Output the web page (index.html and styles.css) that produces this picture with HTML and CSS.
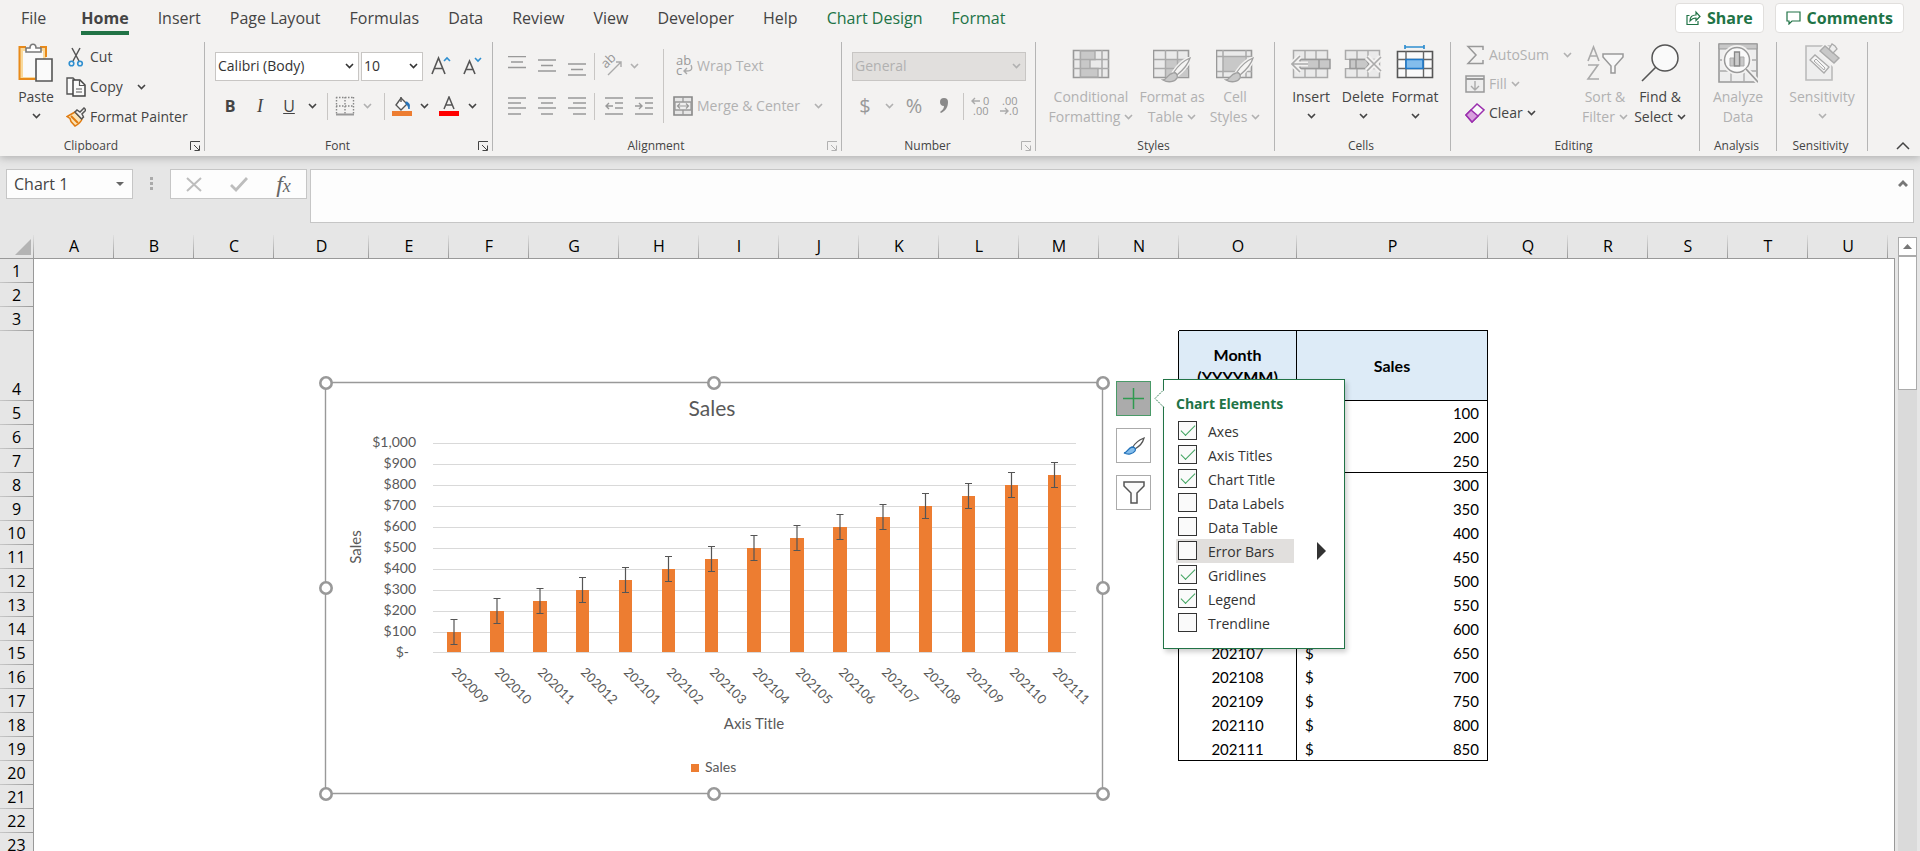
FILE: index.html
```html
<!DOCTYPE html>
<html lang="en">
<head>
<meta charset="utf-8">
<title>Sales workbook</title>
<link rel="stylesheet" href="styles.css">
</head>
<body>
<svg class="defs" aria-hidden="true">
  <defs>
    <symbol id="chev" viewBox="0 0 9 6"><path d="M1 1l3.500 3.500L8 1" fill="none" stroke="currentColor" stroke-width="1.600"/></symbol>
    <symbol id="launch" viewBox="0 0 11 11"><path d="M.5 9V.5H10M4 4l5 5M9.500 4.500v5h-5" fill="none" stroke="currentColor"/></symbol>
    <symbol id="brush" viewBox="0 0 30 26">
      <path d="M29 1c-7 3-12 8-16 14l3 3C22 13 27 8 29 1z" fill="#f5f4f3" stroke="#f3f2f1" stroke-width="4"/>
      <path d="M29 1c-7 3-12 8-16 14l3 3C22 13 27 8 29 1z" fill="#f5f4f3" stroke="#a0a0a0" stroke-width="1.300"/>
      <path d="M12 16c3-1 5 2 4 5-2 4-9 5-14 2 4 0 4-6 10-7z" fill="#c8c8c8" stroke="#a0a0a0" stroke-width="1.300"/>
    </symbol>
  </defs>
</svg>

<header class="ribbon">
  <nav class="tabs" aria-label="Ribbon tabs">
    <a class="tab" href="#file">File</a>
    <a class="tab current" href="#home">Home</a>
    <a class="tab" href="#insert">Insert</a>
    <a class="tab" href="#layout">Page Layout</a>
    <a class="tab" href="#formulas">Formulas</a>
    <a class="tab" href="#data">Data</a>
    <a class="tab" href="#review">Review</a>
    <a class="tab" href="#view">View</a>
    <a class="tab" href="#developer">Developer</a>
    <a class="tab" href="#help">Help</a>
    <a class="tab context" href="#chart-design">Chart Design</a>
    <a class="tab context" href="#format">Format</a>
    <div class="tab-actions">
      <button class="pill"><svg width="15" height="16" viewBox="0 0 15 16"><path d="M3.500 5.500H1v9h11V11M4 11c0-4 2-6 6-6V2l4 4.500-4 4V8c-3 0-4 .5-6 3z" fill="none" stroke="#217346" stroke-width="1.200"/></svg>Share</button>
      <button class="pill"><svg width="15" height="14" viewBox="0 0 15 14"><path d="M1 1h13v9H6l-3 3v-3H1z" fill="none" stroke="#217346" stroke-width="1.200"/></svg>Comments</button>
    </div>
  </nav>

  <div class="groups">
    <section class="group g-clipboard">
      <div class="group-body">
        <button class="big w48">
          <span class="icon"><svg width="36" height="40" viewBox="0 0 36 40"><path d="M2 5h26v32H2z" fill="#f9d99b"/><path d="M5 8h20v26H5z" fill="#fafafa"/><path d="M8 4H1.500v32H17M22 4h6v10" fill="none" stroke="#e88a1a" stroke-width="2"/><path d="M8 9V5h4c0-5 6-5 6 0h5v4z" fill="#fff" stroke="#7a7a7a" stroke-width="1.600"/><path d="M18 16h16v22H18z" fill="#fafafa" stroke="#555" stroke-width="1.600"/></svg></span>
          <span>Paste</span><svg class="chev"><use href="#chev"/></svg>
        </button>
        <div class="stack">
          <button class="small"><svg width="20" height="20" viewBox="0 0 20 20"><path d="M6 1l7 13M14 1L7 14" fill="none" stroke="#555" stroke-width="1.500"/><circle cx="5.500" cy="16.500" r="2.300" fill="none" stroke="#2f8fd0" stroke-width="1.600"/><circle cx="14" cy="16.500" r="2.300" fill="none" stroke="#2f8fd0" stroke-width="1.600"/></svg>Cut</button>
          <button class="small"><svg width="20" height="20" viewBox="0 0 20 20"><path d="M7 17H1V1h6l2 2" fill="#fafafa" stroke="#555" stroke-width="1.400"/><path d="M7 3h7l5 5v11H7z" fill="#fafafa" stroke="#444" stroke-width="1.500"/><path d="M13.500 3v5.500H19M10 12h6M10 15h6" fill="none" stroke="#555" stroke-width="1.200"/></svg>Copy<svg class="chev gap-left"><use href="#chev"/></svg></button>
          <button class="small"><svg width="20" height="20" viewBox="0 0 20 20"><path d="M9 5L1 9.500l3 2 1 3 4 4.500c3-1.500 6-4 7-7z" fill="#fbe3b5" stroke="#e07b10" stroke-width="1.500"/><path d="M5 9l7 7" stroke="#e07b10" stroke-width="2"/><path d="M9 5l2-2 3 2 4-4 2 2-4 4 1.500 3-2 2z" fill="#f3f2f1" stroke="#555" stroke-width="1.500"/></svg>Format Painter</button>
        </div>
      </div>
      <div class="group-label"><span>Clipboard</span><svg class="launch"><use href="#launch"/></svg></div>
    </section>

    <section class="group g-font">
      <div class="group-body">
        <div class="rows">
          <div class="row">
            <label class="combo w144"><select aria-label="Font"><option>Calibri (Body)</option></select><svg class="chev"><use href="#chev"/></svg></label>
            <label class="combo w62"><select aria-label="Font size"><option>10</option></select><svg class="chev"><use href="#chev"/></svg></label>
            <button class="tool w32" aria-label="Increase font size"><svg width="20" height="20" viewBox="0 0 20 20"><path d="M1 18L7.500 2 14 18M3.500 12.500h8" fill="none" stroke="#555" stroke-width="1.600"/><path d="M13 5l3-3 3 3" fill="none" stroke="#2f8fd0" stroke-width="1.600"/></svg></button>
            <button class="tool w32" aria-label="Decrease font size"><svg width="20" height="20" viewBox="0 0 20 20"><path d="M1 18L6.500 5 12 18M3 13.500h7" fill="none" stroke="#555" stroke-width="1.600"/><path d="M12 2l3 3 3-3" fill="none" stroke="#2f8fd0" stroke-width="1.600"/></svg></button>
          </div>
          <div class="row">
            <button class="tool w30 glyph"><b>B</b></button>
            <button class="tool w30 glyph"><i>I</i></button>
            <button class="tool w28 glyph"><u>U</u></button>
            <button class="tool w18" aria-label="Underline options"><svg class="chev"><use href="#chev"/></svg></button>
            <span class="vline"></span>
            <button class="tool w22" aria-label="Borders"><svg width="20" height="20" viewBox="0 0 20 20"><path d="M1 1.500h18M1 10h18M1.500 1v18M10 1v18M18.500 1v18" fill="none" stroke="#888" stroke-width="1.400" stroke-dasharray="1.500 1.500"/><path d="M1 18.500h18" stroke="#999" stroke-width="2"/></svg></button>
            <button class="tool w22 off" aria-label="Border options"><svg class="chev"><use href="#chev"/></svg></button>
            <span class="vline"></span>
            <button class="tool w22" aria-label="Fill color"><svg width="20" height="20" viewBox="0 0 20 20"><path d="M9 2l6 6-6 6-5-5z" fill="#fafafa" stroke="#555" stroke-width="1.400"/><path d="M9 1v5" stroke="#555" stroke-width="1.400"/><path d="M14 6c3 0 4 3 3 7-1-3-1-4-3-5z" fill="#2372b9" stroke="#2372b9"/><path d="M0 15h20v5H0z" fill="#ed7d31"/></svg></button>
            <button class="tool w22" aria-label="Fill color options"><svg class="chev"><use href="#chev"/></svg></button>
            <button class="tool w28" aria-label="Font color"><svg width="20" height="20" viewBox="0 0 20 20"><path d="M5 13L10 1l5 12M7 9h6" fill="none" stroke="#555" stroke-width="1.500"/><path d="M0 15h20v5H0z" fill="#f00"/></svg></button>
            <button class="tool w18" aria-label="Font color options"><svg class="chev"><use href="#chev"/></svg></button>
          </div>
        </div>
      </div>
      <div class="group-label"><span>Font</span><svg class="launch"><use href="#launch"/></svg></div>
    </section>

    <section class="group g-align off">
      <div class="group-body">
        <div class="rows">
          <div class="row">
            <button class="tool w30" aria-label="Top align"><svg width="18" height="20"><path d="M0 .5h18M3 6h12M0 11.500h18" stroke="#999" stroke-width="1.500"/></svg></button>
            <button class="tool w30" aria-label="Middle align"><svg width="18" height="20"><path d="M0 4h18M3 9.500h12M0 15h18" stroke="#999" stroke-width="1.500"/></svg></button>
            <button class="tool w30" aria-label="Bottom align"><svg width="18" height="20"><path d="M0 8h18M3 13.500h12M0 19h18" stroke="#999" stroke-width="1.500"/></svg></button>
            <span class="vline"></span>
            <button class="tool w26" aria-label="Orientation"><svg width="22" height="24" viewBox="0 0 22 24"><text x="5" y="15" transform="rotate(-45 5 15)" class="ico-text">ab</text><path d="M7 21L20 8M15 8h5v5" fill="none" stroke="#aaa" stroke-width="1.400"/></svg></button>
            <button class="tool w18" aria-label="Orientation options"><svg class="chev"><use href="#chev"/></svg></button>
          </div>
          <div class="row">
            <button class="tool w30" aria-label="Align left"><svg width="18" height="20"><path d="M0 2h18M0 7h13M0 12h18M0 18h13" stroke="#999" stroke-width="1.500"/></svg></button>
            <button class="tool w30" aria-label="Center"><svg width="18" height="20"><path d="M0 2h18M3 7h12M0 12h18M3 18h12" stroke="#999" stroke-width="1.500"/></svg></button>
            <button class="tool w30" aria-label="Align right"><svg width="18" height="20"><path d="M0 2h18M5 7h13M0 12h18M5 18h13" stroke="#999" stroke-width="1.500"/></svg></button>
            <span class="vline"></span>
            <button class="tool w30" aria-label="Decrease indent"><svg width="18" height="20"><path d="M0 2h18M10 7h8M10 12h8M0 18h18M8 10H1M4 7l-3 3 3 3" fill="none" stroke="#999" stroke-width="1.400"/></svg></button>
            <button class="tool w30" aria-label="Increase indent"><svg width="18" height="20"><path d="M0 2h18M10 7h8M10 12h8M0 18h18M0 10h7M4 7l3 3-3 3" fill="none" stroke="#999" stroke-width="1.400"/></svg></button>
          </div>
        </div>
        <span class="vline tall"></span>
        <div class="rows">
          <div class="row"><button class="small"><svg width="20" height="24" viewBox="0 0 20 24"><text x="3" y="11" class="ico-text">ab</text><text x="3" y="21" class="ico-text">c</text><path d="M18 11c3 7-4 6-7 6M14 14l-3 3 3 3" fill="none" stroke="#aaa" stroke-width="1.400"/></svg>Wrap Text</button></div>
          <div class="row"><button class="small"><svg width="20" height="20" viewBox="0 0 20 20"><path d="M1 1h18v18H1z" fill="#e6e6e6" stroke="#888" stroke-width="1.600"/><path d="M2 6h16v8H2zM10 1v5M10 14v5" fill="#eee" stroke="#999" stroke-width="1.300"/><path d="M4 10h12M7 7.500L4.500 10 7 12.500M13 7.500l2.500 2.500-2.500 2.500" fill="none" stroke="#999" stroke-width="1.200"/></svg>Merge &amp; Center<svg class="chev gap-left"><use href="#chev"/></svg></button></div>
        </div>
      </div>
      <div class="group-label"><span>Alignment</span><svg class="launch"><use href="#launch"/></svg></div>
    </section>

    <section class="group g-number off">
      <div class="group-body">
        <div class="rows">
          <div class="row"><label class="combo combo-off w174"><select aria-label="Number format" disabled><option>General</option></select><svg class="chev"><use href="#chev"/></svg></label></div>
          <div class="row">
            <button class="tool w28 sign">$</button>
            <button class="tool w20" aria-label="Currency options"><svg class="chev"><use href="#chev"/></svg></button>
            <button class="tool w30 sign" aria-label="Percent">%</button>
            <button class="tool w30" aria-label="Comma style"><svg width="10" height="18" viewBox="0 0 10 18"><path d="M1 5a4 4 0 0 1 8 0c0 6-3 9-7 11l-1-1c2-2 4-3 4-6C2 9 1 7 1 5z" fill="#8a8a8a"/></svg></button>
            <span class="vline"></span>
            <button class="tool w26" aria-label="Increase decimal"><svg width="22" height="24" viewBox="0 0 22 24"><path d="M10 7H2M5 4L2 7l3 3" fill="none" stroke="#aaa" stroke-width="1.400"/><text x="13" y="11" class="ico-text tiny">0</text><text x="3" y="21" class="ico-text tiny">.00</text></svg></button>
            <button class="tool w32" aria-label="Decrease decimal"><svg width="22" height="24" viewBox="0 0 22 24"><path d="M1 17h8M6 14l3 3-3 3" fill="none" stroke="#aaa" stroke-width="1.400"/><text x="3" y="11" class="ico-text tiny">.00</text><text x="10" y="21" class="ico-text tiny">.0</text></svg></button>
          </div>
        </div>
      </div>
      <div class="group-label"><span>Number</span><svg class="launch"><use href="#launch"/></svg></div>
    </section>

    <section class="group g-styles off">
      <div class="group-body">
        <button class="big w92"><span class="icon"><svg width="38" height="36" viewBox="0 0 38 36"><path d="M1.500 5.500h35v27h-35z" fill="#eaeaea" stroke="#999" stroke-width="1.600"/><path d="M1 14.500h36M1 23.500h36M8.500 5v27M30 5v27" stroke="#aaa" stroke-width="1.500"/><path d="M8.500 6H23v8.500H8.500zM8.500 14.500H18v9H8.500zM8.500 23.500H26V32H8.500z" fill="#c8c8c8" stroke="#aaa" stroke-width="1.400"/></svg></span><span>Conditional</span><span class="with-chev">Formatting<svg class="chev"><use href="#chev"/></svg></span></button>
        <button class="big w70"><span class="icon"><svg width="38" height="40" viewBox="0 0 38 40"><path d="M.5 7.500h35v27H.5z" fill="#eaeaea" stroke="#999" stroke-width="1.600"/><path d="M13 17h22v17H13z" fill="#c8c8c8"/><path d="M1 16.500h35M1 25.500h35M12.500 7v27M24.500 7v27" stroke="#aaa" stroke-width="1.500"/><use href="#brush" x="8" y="14" width="30" height="26"/></svg></span><span>Format as</span><span class="with-chev">Table<svg class="chev"><use href="#chev"/></svg></span></button>
        <button class="big w56"><span class="icon"><svg width="38" height="40" viewBox="0 0 38 40"><path d="M.5 7.500h35v27H.5z" fill="#eaeaea" stroke="#999" stroke-width="1.600"/><path d="M7 14h22v14H7z" fill="#c8c8c8"/><path d="M1 13.500h35M1 28.500h35M7 7v27M30 7v27" stroke="#aaa" stroke-width="1.500"/><use href="#brush" x="8" y="14" width="30" height="26"/></svg></span><span>Cell</span><span class="with-chev">Styles<svg class="chev"><use href="#chev"/></svg></span></button>
      </div>
      <div class="group-label"><span>Styles</span></div>
    </section>

    <section class="group g-cells">
      <div class="group-body">
        <button class="big w52"><span class="icon"><svg width="40" height="36" viewBox="0 0 40 36"><path d="M2.500 5.500h34v27h-34z" fill="#eaeaea" stroke="#aaa" stroke-width="1.500"/><path d="M2 14.500h34M2 23.500h34M14 5v27M25 5v27" stroke="#aaa" stroke-width="1.400"/><path d="M9 14.500h30v9H9zM28 14.500v9" fill="#c8c8c8" stroke="#999" stroke-width="1.500"/><path d="M17 19H2M9 11L1 19l8 8" fill="none" stroke="#f3f2f1" stroke-width="5"/><path d="M17 19H2M9 11L1 19l8 8" fill="none" stroke="#aaa" stroke-width="1.600"/></svg></span><span>Insert</span><svg class="chev"><use href="#chev"/></svg></button>
        <button class="big w52"><span class="icon"><svg width="40" height="36" viewBox="0 0 40 36"><path d="M2.500 5.500h34v27h-34z" fill="#eaeaea" stroke="#aaa" stroke-width="1.500"/><path d="M2 14.500h34M2 23.500h34M14 5v27M25 5v27" stroke="#aaa" stroke-width="1.400"/><path d="M0 15h6v8H0z" fill="#f3f2f1"/><path d="M7 14.500h16l3 4.500-3 4.500H7zM13 14.500v9" fill="#c8c8c8" stroke="#999" stroke-width="1.500"/><path d="M24 12l14 14M38 12L24 26" stroke="#f3f2f1" stroke-width="6"/><path d="M24 12l14 14M38 12L24 26" stroke="#aaa" stroke-width="1.600"/></svg></span><span>Delete</span><svg class="chev"><use href="#chev"/></svg></button>
        <button class="big w52"><span class="icon"><svg width="38" height="36" viewBox="0 0 38 36"><path d="M1.500 6.500h35v26h-35z" fill="#fafafa" stroke="#555" stroke-width="1.600"/><path d="M1 14.500h36M1 23.500h36M10 6v26M27.500 6v26" stroke="#666" stroke-width="1.400"/><path d="M10 14.500h17v9H10z" fill="#83bdec" stroke="#1e78c8" stroke-width="1.600"/><path d="M9 2h19M9 0v4M28 0v4" stroke="#2f8fd0" stroke-width="1.700"/></svg></span><span>Format</span><svg class="chev"><use href="#chev"/></svg></button>
      </div>
      <div class="group-label"><span>Cells</span></div>
    </section>

    <section class="group g-edit">
      <div class="group-body">
        <div class="stack tight">
          <button class="small off"><svg width="20" height="20" viewBox="0 0 20 20"><path d="M18 5V1.500H3L11 10l-8 8.500h15V15" fill="none" stroke="#999" stroke-width="1.500"/></svg>AutoSum<svg class="chev push"><use href="#chev"/></svg></button>
          <button class="small off"><svg width="20" height="20" viewBox="0 0 20 20"><path d="M1 2h18v16H1z" fill="#eee" stroke="#999" stroke-width="1.500"/><path d="M1 5h18" stroke="#999" stroke-width="2"/><path d="M10 7v9M6 12l4 4 4-4" fill="none" stroke="#aaa" stroke-width="1.400"/></svg>Fill<svg class="chev"><use href="#chev"/></svg></button>
          <button class="small"><svg width="20" height="20" viewBox="0 0 20 20"><path d="M1 12L12 1l7 6L7 19z" fill="#fafafa" stroke="#9b2fae" stroke-width="1.500"/><path d="M1 12l5-5 7 6-6 6z" fill="#d7a0dd" stroke="#9b2fae" stroke-width="1.500"/></svg>Clear<svg class="chev"><use href="#chev"/></svg></button>
        </div>
        <button class="big w52 off"><span class="icon"><svg width="38" height="38" viewBox="0 0 38 38"><path d="M2 17L7.500 3 13 17M4 12h7M2 21h10L2 35h11" fill="none" stroke="#aaa" stroke-width="1.600"/><path d="M17 10h20v3l-8 9v7h-4v-7l-8-9z" fill="#f8f8f8" stroke="#999" stroke-width="1.500"/></svg></span><span>Sort &amp;</span><span class="with-chev">Filter<svg class="chev"><use href="#chev"/></svg></span></button>
        <button class="big w58"><span class="icon"><svg width="38" height="38" viewBox="0 0 38 38"><circle cx="24" cy="14" r="13" fill="#fafafa" stroke="#555" stroke-width="1.500"/><path d="M15 23L1 37" stroke="#555" stroke-width="1.600"/></svg></span><span>Find &amp;</span><span class="with-chev">Select<svg class="chev"><use href="#chev"/></svg></span></button>
      </div>
      <div class="group-label"><span>Editing</span></div>
    </section>

    <section class="group g-analysis off">
      <div class="group-body">
        <button class="big w58"><span class="icon"><svg width="40" height="40" viewBox="0 0 40 40"><path d="M1 1h38v38H1z" fill="#eee" stroke="#999" stroke-width="1.600"/><path d="M1 1h38v5H1z" fill="#c8c8c8" stroke="#999"/><path d="M1 17h38M1 28h38M13 28v11M26 28v11M13 6v10M29 6v10" stroke="#aaa" stroke-width="1.300"/><circle cx="19" cy="17" r="15" fill="#f3f2f1"/><circle cx="19" cy="17" r="12.500" fill="#fafafa" stroke="#999" stroke-width="1.500"/><path d="M28 26l12 13" stroke="#f3f2f1" stroke-width="5"/><path d="M28 26l12 13" stroke="#999" stroke-width="1.800"/><path d="M12 15h4v8h-4zM22 14h4v9h-4z" fill="#c8c8c8" stroke="#aaa"/><path d="M16.500 9h5v14h-5z" fill="#ccc" stroke="#888" stroke-width="1.300"/></svg></span><span>Analyze</span><span>Data</span></button>
      </div>
      <div class="group-label"><span>Analysis</span></div>
    </section>

    <section class="group g-sens off">
      <div class="group-body">
        <button class="big w74"><span class="icon"><svg width="38" height="40" viewBox="0 0 38 40"><path d="M3 3h26v34H3z" fill="#eee" stroke="#bbb" stroke-width="1.600"/><path d="M7 17l5-5 14 12-5 6z" fill="#f5f5f5" stroke="#aaa" stroke-width="1.300"/><path d="M11 18l2-2 9 9-1 2z" fill="none" stroke="#aaa"/><path d="M17 8l5-5 5 4 4-5 5 4-5 5 4 4-5 6z" fill="#c8c8c8" stroke="#f3f2f1" stroke-width="4"/><path d="M17 8l5-5 14 12-5 5z" fill="#c8c8c8" stroke="#aaa" stroke-width="1.400"/><path d="M26 6l3-5 3 2 2 3-4 4z" fill="#eee" stroke="#aaa" stroke-width="1.300"/></svg></span><span>Sensitivity</span><svg class="chev"><use href="#chev"/></svg></button>
      </div>
      <div class="group-label"><span>Sensitivity</span></div>
    </section>
    <button class="collapse" aria-label="Collapse ribbon"><svg width="14" height="9" viewBox="0 0 14 9"><path d="M1 8l6-6 6 6" fill="none" stroke="#444" stroke-width="1.500"/></svg></button>
  </div>
</header>

<div class="formula-bar">
  <label class="name-box"><input aria-label="Name box" value="Chart 1"><svg width="8" height="5"><path d="M0 0h8L4 4z" fill="#666"/></svg></label>
  <span class="dots"><i></i><i></i><i></i></span>
  <div class="fx-box">
    <button aria-label="Cancel"><svg width="16" height="15" viewBox="0 0 16 15"><path d="M1 1l14 13M15 1L1 14" stroke="#bdbdbd" stroke-width="2"/></svg></button>
    <button aria-label="Enter"><svg width="18" height="15" viewBox="0 0 18 15"><path d="M1 8l5 5L17 1" fill="none" stroke="#bdbdbd" stroke-width="2.800"/></svg></button>
    <button class="fx" aria-label="Insert function">f<small>x</small></button>
  </div>
  <label class="formula"><textarea aria-label="Formula"></textarea><svg width="10" height="7" viewBox="0 0 10 7"><path d="M0 5l5-5 5 5-2 2-3-3-3 3z" fill="#777"/></svg></label>
</div>

<main class="workbook">
  <div class="sheet">
    <table class="grid">
      <colgroup><col class="c-head"><col span="3" class="c80"><col class="c95"><col span="2" class="c80"><col class="c90"><col span="7" class="c80"><col class="c118"><col class="c191"><col span="5" class="c80"><col></colgroup>
      <thead><tr><th class="corner"><svg width="16" height="16"><path d="M16 0v16H0z" fill="#b4b4b4"/></svg></th><th>A</th><th>B</th><th>C</th><th>D</th><th>E</th><th>F</th><th>G</th><th>H</th><th>I</th><th>J</th><th>K</th><th>L</th><th>M</th><th>N</th><th>O</th><th>P</th><th>Q</th><th>R</th><th>S</th><th>T</th><th>U</th><th class="tail"></th></tr></thead>
      <tbody>
        <tr><th>1</th><td colspan="14"></td><td></td><td></td><td colspan="6"></td></tr>
        <tr><th>2</th><td colspan="14"></td><td></td><td></td><td colspan="6"></td></tr>
        <tr class="rule"><th>3</th><td colspan="14"></td><td class="o"></td><td class="p"></td><td colspan="6"></td></tr>
        <tr class="title rule data"><th>4</th><td colspan="14"></td><td class="o">Month<br>(YYYYMM)</td><td class="p">Sales</td><td colspan="6"></td></tr>
        <tr class="data"><th>5</th><td colspan="14"></td><td class="o">202009</td><td class="p"><span>$</span>100</td><td colspan="6"></td></tr>
        <tr class="data"><th>6</th><td colspan="14"></td><td class="o">202010</td><td class="p"><span>$</span>200</td><td colspan="6"></td></tr>
        <tr class="data rule"><th>7</th><td colspan="14"></td><td class="o">202011</td><td class="p"><span>$</span>250</td><td colspan="6"></td></tr>
        <tr class="data"><th>8</th><td colspan="14"></td><td class="o">202012</td><td class="p"><span>$</span>300</td><td colspan="6"></td></tr>
        <tr class="data"><th>9</th><td colspan="14"></td><td class="o">202101</td><td class="p"><span>$</span>350</td><td colspan="6"></td></tr>
        <tr class="data"><th>10</th><td colspan="14"></td><td class="o">202102</td><td class="p"><span>$</span>400</td><td colspan="6"></td></tr>
        <tr class="data"><th>11</th><td colspan="14"></td><td class="o">202103</td><td class="p"><span>$</span>450</td><td colspan="6"></td></tr>
        <tr class="data"><th>12</th><td colspan="14"></td><td class="o">202104</td><td class="p"><span>$</span>500</td><td colspan="6"></td></tr>
        <tr class="data"><th>13</th><td colspan="14"></td><td class="o">202105</td><td class="p"><span>$</span>550</td><td colspan="6"></td></tr>
        <tr class="data"><th>14</th><td colspan="14"></td><td class="o">202106</td><td class="p"><span>$</span>600</td><td colspan="6"></td></tr>
        <tr class="data"><th>15</th><td colspan="14"></td><td class="o">202107</td><td class="p"><span>$</span>650</td><td colspan="6"></td></tr>
        <tr class="data"><th>16</th><td colspan="14"></td><td class="o">202108</td><td class="p"><span>$</span>700</td><td colspan="6"></td></tr>
        <tr class="data"><th>17</th><td colspan="14"></td><td class="o">202109</td><td class="p"><span>$</span>750</td><td colspan="6"></td></tr>
        <tr class="data"><th>18</th><td colspan="14"></td><td class="o">202110</td><td class="p"><span>$</span>800</td><td colspan="6"></td></tr>
        <tr class="data rule"><th>19</th><td colspan="14"></td><td class="o">202111</td><td class="p"><span>$</span>850</td><td colspan="6"></td></tr>
        <tr><th>20</th><td colspan="14"></td><td></td><td></td><td colspan="6"></td></tr>
        <tr><th>21</th><td colspan="14"></td><td></td><td></td><td colspan="6"></td></tr>
        <tr><th>22</th><td colspan="14"></td><td></td><td></td><td colspan="6"></td></tr>
        <tr><th>23</th><td colspan="14"></td><td></td><td></td><td colspan="6"></td></tr>
      </tbody>
    </table>

    <svg class="chart" width="793" height="427" viewBox="318 375 793 427" role="img" aria-label="Sales chart">
      <defs><path id="err" d="M0-12.500V12.500M-3.500-12.500h7M-3.500 12.500h7" fill="none" stroke="#555" stroke-width="1.200"/></defs>
      <path d="M325.500 382.500h777v411h-777z" fill="#fff" stroke="#999" stroke-width="1.400"/>
      <path d="M433 443.500h643M433 464.500h643M433 485.500h643M433 506.500h643M433 527.500h643M433 548.500h643M433 569.500h643M433 590.500h643M433 611.500h643M433 632.500h643M433 652.500h643" stroke="#d9d9d9"/>
      <g fill="#ed7d31">
        <path d="M447 632h14v20h-14zM490 611h14v41h-14zM533 601h14v51h-14zM576 590h13v62h-13zM619 580h13v72h-13zM662 569h13v83h-13zM705 559h13v93h-13zM747 548h14v104h-14zM790 538h14v114h-14zM833 527h14v125h-14zM876 517h14v135h-14zM919 506h13v146h-13zM962 496h13v156h-13zM1005 485h13v167h-13zM1048 475h13v177h-13z"/>
        <path d="M691 764h8v8h-8z"/>
      </g>
      <use href="#err" x="454" y="632"/><use href="#err" x="497" y="611"/><use href="#err" x="540" y="601"/><use href="#err" x="582.500" y="590"/><use href="#err" x="625.500" y="580"/><use href="#err" x="668.500" y="569"/><use href="#err" x="711.500" y="559"/><use href="#err" x="754" y="548"/><use href="#err" x="797" y="538"/><use href="#err" x="840" y="527"/><use href="#err" x="883" y="517"/><use href="#err" x="925.500" y="506"/><use href="#err" x="968.500" y="496"/><use href="#err" x="1011.500" y="485"/><use href="#err" x="1054.500" y="475"/>
      <g class="axis" text-anchor="end">
        <text x="416" y="447">$1,000</text><text x="416" y="468">$900</text><text x="416" y="489">$800</text><text x="416" y="510">$700</text><text x="416" y="531">$600</text><text x="416" y="552">$500</text><text x="416" y="573">$400</text><text x="416" y="594">$300</text><text x="416" y="615">$200</text><text x="416" y="636">$100</text><text x="409" y="657">$-</text>
      </g>
      <g class="axis-x">
        <text transform="translate(451 673) rotate(45)">202009</text><text transform="translate(494 673) rotate(45)">202010</text><text transform="translate(537 673) rotate(45)">202011</text><text transform="translate(580 673) rotate(45)">202012</text><text transform="translate(623 673) rotate(45)">202101</text><text transform="translate(666 673) rotate(45)">202102</text><text transform="translate(709 673) rotate(45)">202103</text><text transform="translate(752 673) rotate(45)">202104</text><text transform="translate(795 673) rotate(45)">202105</text><text transform="translate(838 673) rotate(45)">202106</text><text transform="translate(881 673) rotate(45)">202107</text><text transform="translate(923 673) rotate(45)">202108</text><text transform="translate(966 673) rotate(45)">202109</text><text transform="translate(1009 673) rotate(45)">202110</text><text transform="translate(1052 673) rotate(45)">202111</text>
      </g>
      <text class="axis" x="705" y="772">Sales</text>
      <text class="chart-title" x="712" y="416" text-anchor="middle">Sales</text>
      <text class="axis-title" x="754" y="729" text-anchor="middle">Axis Title</text>
      <text class="axis-title" transform="translate(361 547) rotate(-90)" text-anchor="middle">Sales</text>
      <g fill="#fff" stroke="#999" stroke-width="2.600">
        <circle cx="326" cy="383" r="5.700"/><circle cx="714" cy="383" r="5.700"/><circle cx="1103" cy="383" r="5.700"/><circle cx="326" cy="588" r="5.700"/><circle cx="1103" cy="588" r="5.700"/><circle cx="326" cy="794" r="5.700"/><circle cx="714" cy="794" r="5.700"/><circle cx="1103" cy="794" r="5.700"/>
      </g>
    </svg>

    <div class="chart-tools">
      <button class="active" aria-label="Chart elements"><svg width="21" height="21"><path d="M0 10.500h21M10.500 0v21" stroke="#2f9a4f" stroke-width="1.500"/></svg></button>
      <button aria-label="Chart styles"><svg width="22" height="18" viewBox="0 0 22 18"><path d="M21 1C16 3 12 6 10 10l2 2C17 9 20 5 21 1z" fill="#fff" stroke="#555" stroke-width="1.300"/><path d="M9 10c3 0 4 2 3 4-2 3-7 4-11 2 3 0 4-5 8-6z" fill="#83bdec" stroke="#2372b9" stroke-width="1.300"/></svg></button>
      <button aria-label="Chart filters"><svg width="22" height="23" viewBox="0 0 22 23"><path d="M1 1h20v4l-7 7v10H8V12L1 5z" fill="#fafafa" stroke="#555" stroke-width="1.500"/></svg></button>
    </div>

    <aside class="popup">
      <svg class="pointer" width="11" height="19" viewBox="0 0 11 19"><path d="M11 0L1 9.500 11 19z" fill="#fff"/><path d="M10 .5L1 9.500l9 9" fill="none" stroke="#217346" stroke-dasharray="1.500 1"/></svg>
      <h2>Chart Elements</h2>
      <label><input type="checkbox" checked>Axes</label>
      <label><input type="checkbox" checked>Axis Titles</label>
      <label><input type="checkbox" checked>Chart Title</label>
      <label><input type="checkbox">Data Labels</label>
      <label><input type="checkbox">Data Table</label>
      <div class="hover-row"><label class="hover"><input type="checkbox">Error Bars</label><svg width="9" height="18"><path d="M0 0v18l9-9z" fill="#333"/></svg></div>
      <label><input type="checkbox" checked>Gridlines</label>
      <label><input type="checkbox" checked>Legend</label>
      <label><input type="checkbox">Trendline</label>
    </aside>
  </div>
  <div class="scroll">
    <button aria-label="Scroll up"><svg width="9" height="5"><path d="M4.500 0L9 5H0z" fill="#777"/></svg></button>
    <div class="thumb"></div>
  </div>
</main>
</body>
</html>
```
FILE: styles.css
```css
* { box-sizing: border-box; }
body {
  margin: 0;
  height: 100vh;
  display: flex;
  flex-direction: column;
  overflow: hidden;
  background: #e6e6e6;
  color: #444;
  font: 14px/20px "Open Sans", "Noto Sans", sans-serif;
}
button {
  margin: 0;
  padding: 0;
  border: 0;
  background: none;
  color: inherit;
  font: inherit;
}
svg { display: block; flex: none; }
.defs { position: absolute; width: 0; height: 0; }

/* ribbon */
.ribbon { background: #f3f2f1; height: 156px; flex: none; position: relative; box-shadow: 0 2px 8px #b0b0b0; }
.tabs { display: flex; align-items: center; height: 36px; padding: 0 16px 0 21px; gap: 29px; font-size: 16px; }
.tab { display: flex; align-items: center; height: 36px; color: #444; text-decoration: none; white-space: nowrap; }
.tab:first-child { margin-right: 6px; }
.tab.current { font-weight: 700; background: linear-gradient(#217346, #217346) 0 31px / 100% 4px no-repeat; }
.tab.context { color: #217346; }
.tab-actions { margin-left: auto; display: flex; gap: 11px; }
.pill { display: flex; align-items: center; gap: 6px; height: 30px; padding: 0 10px; background: #fff; border: 1px solid #e1dfdd; border-radius: 4px; color: #217346; font-weight: 700; font-size: 16px; }

.groups { display: flex; padding-top: 6px; }
.group { height: 109px; display: flex; flex-direction: column; flex: none; border-right: 1px solid #b5b5b5; }
.group-body { display: flex; height: 97px; flex: none; }
.group-label { display: flex; align-items: center; gap: 8px; height: 14px; padding-right: 3px; font-size: 12px; line-height: 14px; }
.group-label span { flex: 1; text-align: center; }
.launch { width: 11px; height: 11px; }
.g-clipboard { width: 205px; } .g-clipboard .group-body { padding-left: 12px; gap: 6px; }
.g-font { width: 288px; } .g-font .group-body { padding-left: 10px; }
.g-align { width: 349px; } .g-align .group-body { padding-left: 9px; }
.g-number { width: 194px; } .g-number .group-body { padding-left: 9px; }
.g-styles { width: 239px; } .g-styles .group-body { padding-left: 9px; }
.g-cells { width: 176px; } .g-cells .group-body { padding-left: 10px; }
.g-edit { width: 249px; } .g-edit .group-body { padding-left: 14px; }
.g-analysis { width: 77px; } .g-analysis .group-body { justify-content: center; }
.g-sens { width: 91px; } .g-sens .group-body { justify-content: center; }
.off { color: #b1b1b1; }
.off .group-label span { color: #444; }
.collapse { margin: auto 10px 0 auto; height: 12px; }

.chev { width: 9px; height: 6px; }
.big { display: flex; flex-direction: column; align-items: center; white-space: nowrap; flex: none; }
.big .icon { height: 45px; display: flex; align-items: center; justify-content: center; padding-bottom: 3px; }
.big > .chev { margin-top: 6px; }
.with-chev { display: flex; align-items: center; gap: 4px; }
.stack { display: grid; grid-auto-rows: 30px; align-content: start; }
.stack.tight { grid-auto-rows: 29px; width: 107px; margin: -2px 7px 0 0; }
.small { display: flex; align-items: center; gap: 4px; white-space: nowrap; }
.gap-left { margin-left: 10px; }
.push { margin-left: auto; }
.rows { padding-top: 4px; }
.row { display: flex; align-items: center; height: 40px; }
.tool { display: flex; align-items: center; justify-content: center; height: 26px; flex: none; }
.vline { width: 1px; height: 27px; margin: 0 6px; background: #c8c6c4; }
.g-align .row .vline { margin: 0 4px 0 2px; }
.g-number .vline { margin: 0 4px; }
.vline.tall { height: 74px; margin: 7px 9px 0 4px; }
.glyph { font-size: 16px; }
.glyph i { font-family: "Liberation Serif", serif; font-size: 18px; }
.sign { font-size: 20px; color: #999; }
.ico-text { font: 13px "Open Sans", sans-serif; fill: #999; }
.ico-text.tiny { font-size: 11px; }
.w18 { width: 18px; } .w20 { width: 20px; } .w22 { width: 22px; } .w26 { width: 26px; }
.w28 { width: 28px; } .w30 { width: 30px; } .w32 { width: 32px; } .w48 { width: 48px; }
.w52 { width: 52px; } .w56 { width: 56px; } .w58 { width: 58px; } .w62 { width: 62px; }
.w70 { width: 70px; } .w74 { width: 74px; } .w92 { width: 92px; }
.w144 { width: 144px; } .w174 { width: 163px; flex: 1; }
.combo { display: flex; align-items: center; height: 29px; padding: 0 4px 0 2px; margin-right: 2px; border: 1px solid #c8c6c4; background: #fff; color: #333; }
.combo select { appearance: none; flex: 1; min-width: 0; border: 0; padding: 0; background: none; color: #333; font: inherit; }
.g-number .rows { width: 176px; }
.combo-off { margin: 0 1px; background: #e1dfdd; color: #b1b1b1; }
.combo-off select { color: #b1b1b1; opacity: 1; }

/* formula bar */
.formula-bar { display: flex; align-items: flex-start; flex: none; padding: 13px 6px 12px; height: 79px; }
.name-box { display: flex; align-items: center; width: 127px; height: 30px; padding: 0 8px 0 7px; background: #fdfdfd; border: 1px solid #c6c6c6; }
.name-box input { flex: 1; min-width: 0; border: 0; padding: 0; background: none; color: #444; font: inherit; font-size: 16px; }
.dots { display: grid; gap: 2px; width: 37px; padding-top: 8px; justify-content: center; }
.dots i { width: 3px; height: 3px; background: #aaa; }
.fx-box { display: flex; width: 137px; height: 30px; background: #fdfdfd; border: 1px solid #c6c6c6; }
.fx-box button { flex: 1; display: flex; align-items: center; justify-content: center; }
.fx-box .fx { color: #666; font: italic 400 24px/28px "Liberation Serif", serif; }
.fx small { font-size: 18px; padding-top: 4px; }
.formula { display: flex; flex: 1; height: 54px; margin-left: 3px; padding: 10px 5px 0 0; background: #fdfdfd; border: 1px solid #c6c6c6; }
.formula textarea { flex: 1; border: 0; background: none; resize: none; }

/* sheet */
.workbook { display: flex; flex: 1; min-height: 0; overflow: hidden; }
.sheet { position: relative; flex: 1; min-width: 0; overflow: hidden; }
.grid { width: 100%; table-layout: fixed; border-collapse: separate; border-spacing: 0; color: #000; }
.c-head { width: 34px; } .c80 { width: 80px; } .c90 { width: 90px; } .c95 { width: 95px; }
.c118 { width: 118px; } .c191 { width: 191px; }
.grid th, .grid td { padding: 0; }
.grid th { font-weight: 400; font-size: 16px; line-height: 20px; }
.grid thead th { height: 24px; padding-bottom: 1px; border-bottom: 1px solid #999; background: linear-gradient(#e0e0e0, #999) right / 1px 100% no-repeat; }
.grid thead th.tail { background: none; }
.corner svg { margin: 2px 3px 0 auto; }
.grid tbody th { height: 24px; vertical-align: bottom; border-right: 1px solid #999; background: linear-gradient(to right, #c8c8c8, #999) bottom / 100% 1px no-repeat #e6e6e6; padding-bottom: 2px; }
.grid tbody td { background: #fff; }
.grid tbody td:last-child { border-right: 1px solid #999; }
.grid tbody .title td { height: 70px; }
.data td { font: 15px/22px Lato, "Open Sans", sans-serif; }
.data td:nth-child(2), .data .o, .data .p { border-right: 1px solid #000; }
.rule .o, .rule .p { border-bottom: 1px solid #000; }
.data .o { text-align: center; }
.data .p { text-align: right; padding: 0 8px; }
.data .p span { float: left; }
.grid .title .o, .grid .title .p { background: #ddebf7; font-weight: 700; font-size: 16px; text-align: center; }

/* chart */
.chart { position: absolute; left: 318px; top: 140px; font-family: Lato, "Open Sans", sans-serif; fill: #595959; }
.axis { font-size: 14px; }
.axis-x { font-size: 13px; }
.axis-title { font-size: 15px; }
.chart-title { font-size: 21px; }
.chart-tools { position: absolute; left: 1116px; top: 146px; display: grid; gap: 12px; }
.chart-tools button { display: flex; align-items: center; justify-content: center; width: 35px; height: 35px; background: #fff; border: 1px solid #ababab; }
.chart-tools .active { background: #ababab; border-color: #4a9a68; }
.popup { position: absolute; left: 1163px; top: 144px; width: 182px; height: 270px; padding: 14px 12px 0; background: #fff; border: 1px solid #217346; box-shadow: 2px 3px 5px rgba(0, 0, 0, .2); color: #333; }
.pointer { position: absolute; left: -10px; top: 9px; }
.popup h2 { margin: 0 0 5px; font-size: 14px; line-height: 20px; color: #217346; }
.popup label { display: flex; align-items: center; gap: 11px; width: 118px; height: 24px; padding: 1px 0 0 2px; white-space: nowrap; }
.popup .hover { background: #e1dfdd; }
.hover-row { display: flex; align-items: center; gap: 23px; }
.popup input { appearance: none; width: 19px; height: 19px; margin: 0 0 3px; border: 1px solid #333; background: #fafafa; display: flex; justify-content: center; flex: none; }
.popup input:checked::before { content: ""; width: 13px; height: 6px; margin-top: 3px; border: solid #3fa35f; border-width: 0 0 1px 1px; transform: rotate(-45deg); }

/* scroll bar */
.scroll { width: 19px; margin: 2px 3px 0; background: #dadada; flex: none; }
.scroll button { display: flex; align-items: center; justify-content: center; width: 19px; height: 19px; background: #fff; border: 1px solid #ababab; }
.thumb { height: 134px; background: #fff; border: 1px solid #ababab; }
```
